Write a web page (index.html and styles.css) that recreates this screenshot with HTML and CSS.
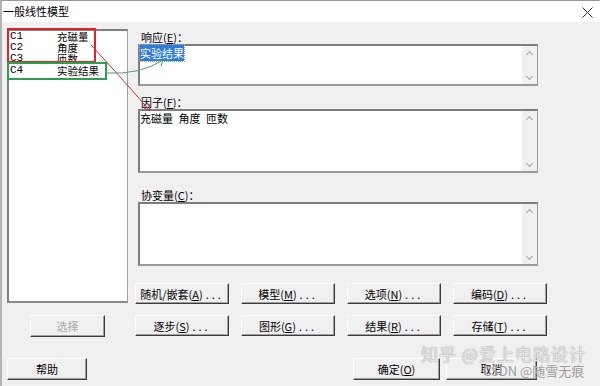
FILE: index.html
```html
<!DOCTYPE html>
<html lang="zh">
<head>
    <meta charset="UTF-8">
    <title>一般线性模型</title>
    <link rel="stylesheet" href="styles.css">
</head>
<body>
    <div class="window">
        <div class="titlebar">
            <span class="title">一般线性模型</span>
            <svg class="close" width="11" height="11" viewBox="0 0 11 11">
                <path d="M0.5 0.5 L10.5 10.5 M10.5 0.5 L0.5 10.5" stroke="#333" stroke-width="1" fill="none"/>
            </svg>
        </div>

        <div class="body">
            <div class="left">
                <div class="listbox">
                    <div class="item"><span class="code">C1</span><span>充磁量</span></div>
                    <div class="item"><span class="code">C2</span><span>角度</span></div>
                    <div class="item"><span class="code">C3</span><span>匝数</span></div>
                    <div class="item"><span class="code">C4</span><span>实验结果</span></div>
                </div>
                <button class="btn btn-select" disabled>选择</button>
                <button class="btn btn-help">帮助</button>
            </div>

            <div class="right">
                <div class="label">响应(<u>E</u>)：</div>
                <div class="field field-short">
                    <div class="field-text"><span class="selected">实验结果</span></div>
                    <div class="scroll"><span class="arrow-up"></span><span class="arrow-down"></span></div>
                </div>

                <div class="label label-factor">因子(<u>F</u>)：</div>
                <div class="field">
                    <div class="field-text spaced">充磁量 角度 匝数</div>
                    <div class="scroll"><span class="arrow-up"></span><span class="arrow-down"></span></div>
                </div>

                <div class="label label-cov">协变量(<u>C</u>)：</div>
                <div class="field">
                    <div class="field-text"></div>
                    <div class="scroll"><span class="arrow-up"></span><span class="arrow-down"></span></div>
                </div>

                <div class="btn-grid">
                    <button class="btn">随机/嵌套(<u>A</u>)<span class="dots">...</span></button>
                    <button class="btn">模型(<u>M</u>)<span class="dots">...</span></button>
                    <button class="btn">选项(<u>N</u>)<span class="dots">...</span></button>
                    <button class="btn">编码(<u>D</u>)<span class="dots">...</span></button>
                    <button class="btn">逐步(<u>S</u>)<span class="dots">...</span></button>
                    <button class="btn">图形(<u>G</u>)<span class="dots">...</span></button>
                    <button class="btn">结果(<u>R</u>)<span class="dots">...</span></button>
                    <button class="btn">存储(<u>T</u>)<span class="dots">...</span></button>
                </div>

                <div class="actions">
                    <button class="btn btn-ok">确定(<u>O</u>)</button>
                    <button class="btn btn-cancel">取消</button>
                </div>
            </div>
        </div>

        <!-- annotation marks drawn over the dialog -->
        <svg class="marks" width="600" height="386" viewBox="0 0 600 386">
            <rect x="8" y="29" width="87" height="33" fill="none" stroke="#e0242a" stroke-width="2"/>
            <rect x="8" y="63" width="98" height="16" fill="none" stroke="#2ca04a" stroke-width="2"/>
            <path d="M91 45 Q118 74 150 111" fill="none" stroke="#b8364a" stroke-width="1"/>
            <path d="M144 108 L150 111 L149 104" fill="none" stroke="#b8364a" stroke-width="1"/>
            <path d="M106 73 Q140 75 163 60" fill="none" stroke="#4aa36e" stroke-width="1"/>
            <path d="M156 60 L163 60 L161 66" fill="none" stroke="#4aa36e" stroke-width="1"/>
        </svg>

        <div class="watermark">
            <div class="wm-zhihu">知乎 @爱上电路设计</div>
            <div class="wm-csdn">CSDN @随雪无痕</div>
        </div>
    </div>
</body>
</html>
```

FILE: styles.css
```css
body {
    margin: 0;
    font-family: "Noto Sans CJK SC", "DejaVu Sans", sans-serif;
    font-size: 11px;
    color: #000;
}
.window {
    position: relative;
    width: 600px;
    height: 386px;
    box-sizing: border-box;
    border-top: 1px solid #9a9a9a;
    border-left: 2px solid #b4b4b4;
    background-color: #f0f0f0;
    overflow: hidden;
}
.titlebar {
    height: 21px;
    background-color: #fff;
    display: flex;
    align-items: center;
    justify-content: space-between;
    padding: 0 7px 0 1px;
}
.title {
    font-size: 11px;
    line-height: 13px;
}
.close {
    margin-top: 1px;
}
.body {
    display: flex;
    padding-left: 5px;
}
.left {
    width: 121px;
    display: flex;
    flex-direction: column;
    align-items: flex-start;
}
.listbox {
    box-sizing: border-box;
    margin-top: 7px;
    width: 121px;
    height: 274px;
    background-color: #fff;
    border-top: 2px solid #808080;
    border-left: 2px solid #808080;
    border-right: 1px solid #a0a0a0;
    border-bottom: 2px solid #8a8a8a;
    padding-left: 1px;
}
.item {
    display: flex;
    height: 11px;
    line-height: 11px;
    font-size: 10.5px;
}
.item:last-child {
    margin-top: 1px;
}
.code {
    width: 47px;
    font-family: "Liberation Mono", monospace;
    font-size: 11px;
}
.btn {
    box-sizing: border-box;
    height: 22px;
    padding: 0;
    margin: 0;
    font-family: "Noto Sans CJK SC", "DejaVu Sans", sans-serif;
    font-size: 11px;
    line-height: 14px;
    color: #000;
    background-color: #f0f0f0;
    border-top: 1px solid #fff;
    border-left: 1px solid #fff;
    border-right: 1px solid #3c3c3c;
    border-bottom: 1px solid #3c3c3c;
    box-shadow: inset -1px -1px 0 #a0a0a0;
    text-align: center;
}
.dots {
    letter-spacing: 3px;
    margin-left: 3px;
}
.btn-select {
    margin-top: 12px;
    margin-left: 23px;
    width: 75px;
    color: #a8a8a8;
}
.btn-help {
    margin-top: 21px;
    width: 80px;
}
.right {
    margin-left: 7px;
    padding-top: 9px;
    display: flex;
    flex-direction: column;
}
.label {
    height: 13px;
    line-height: 13px;
    padding-left: 6px;
    font-size: 11px;
}
.label-factor {
    margin-top: 10px;
}
.label-cov {
    margin-top: 16px;
}
.field {
    box-sizing: border-box;
    margin-left: 3px;
    width: 400px;
    height: 64px;
    display: flex;
    background-color: #fff;
    border-top: 2px solid #7e7e7e;
    border-left: 2px solid #7e7e7e;
    border-right: 1px solid #9a9a9a;
    border-bottom: 2px solid #9a9a9a;
}
.field-short {
    height: 42px;
}
.field-text {
    flex: 1;
    line-height: 12px;
    font-size: 11px;
    padding-top: 1px;
}
.spaced {
    word-spacing: 3px;
}
.selected {
    background-color: #2f7bd8;
    color: #fff;
    outline: 1px dotted #7aa8e0;
}
.scroll {
    width: 15px;
    background-color: #f0f0f0;
    display: flex;
    flex-direction: column;
    justify-content: space-between;
    align-items: center;
    padding: 6px 0 5px;
}
.arrow-up,
.arrow-down {
    width: 4px;
    height: 4px;
    border-left: 1px solid #a6a6a6;
    border-top: 1px solid #a6a6a6;
    transform: rotate(45deg);
}
.arrow-down {
    transform: rotate(225deg);
}
.btn-grid {
    margin-top: 17px;
    display: grid;
    grid-template-columns: repeat(4, 94px);
    grid-auto-rows: 21px;
    column-gap: 12px;
    row-gap: 11px;
}
.btn-grid .btn {
    height: 21px;
}
.actions {
    margin-top: 22px;
    margin-left: 218px;
    display: flex;
    gap: 6px;
}
.btn-ok {
    width: 87px;
}
.btn-cancel {
    width: 91px;
}
.marks {
    position: absolute;
    top: -1px;
    left: -2px;
    pointer-events: none;
}
.watermark {
    position: absolute;
    left: 419px;
    top: 343px;
    width: 175px;
    pointer-events: none;
}
.wm-zhihu {
    font-size: 17px;
    line-height: 19px;
    color: rgba(255, 255, 255, 0.75);
    text-shadow: 0 0 1px #9c9c9c, 0 0 1px #9c9c9c;
    letter-spacing: 1px;
}
.wm-csdn {
    margin-left: 62px;
    font-size: 13px;
    line-height: 15px;
    color: #9a9a9a;
    text-shadow: 0 0 1px #fff;
}
```
